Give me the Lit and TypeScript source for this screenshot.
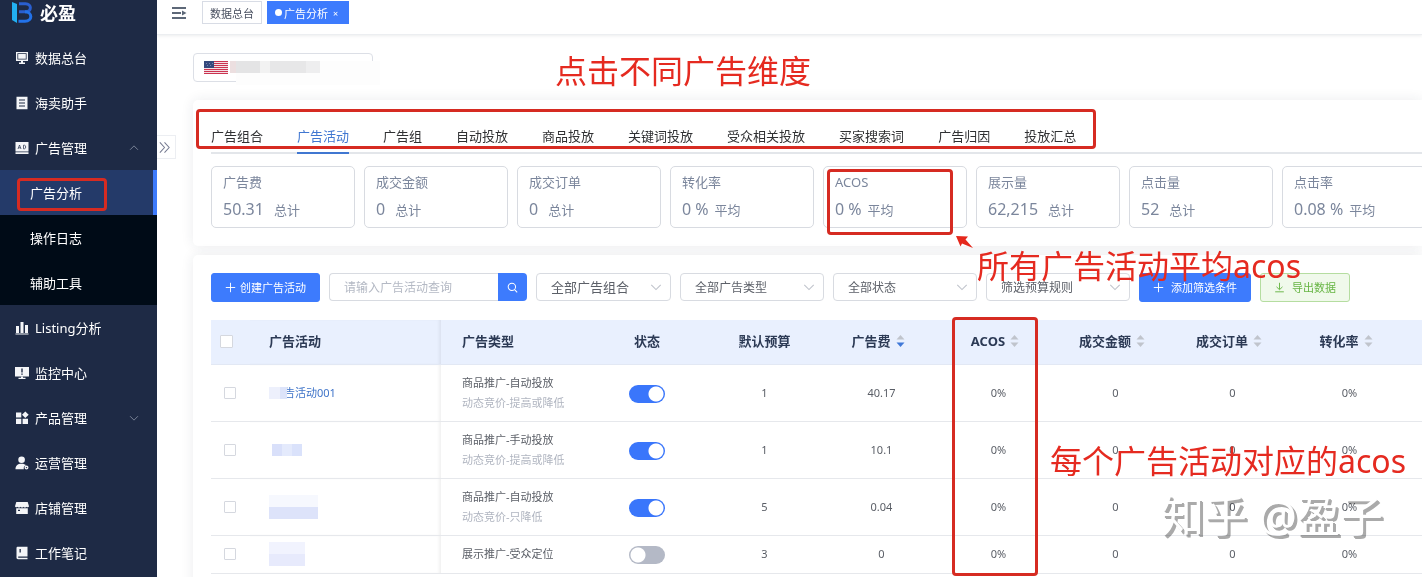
import { LitElement, html, css, svg, nothing } from "lit";
import { customElement, state } from "lit/decorators.js";
import { classMap } from "lit/directives/class-map.js";

const icons: Record<string, unknown> = {
  monitor: svg`<path fill-rule="evenodd" d="M1 1h12v9H1zM2.400 2.300v6.200h9.200V2.300z"/><path d="M3.200 3h7.600v4.800H3.200zM6 10h2v1.500h2V13H4v-1.500h2z"/>`,
  list: svg`<path fill-rule="evenodd" d="M1.500.8h11v12.400h-11zM4 3.400v1.100h6V3.400zM4 6.400v1.100h6V6.400zM4 9.400v1.100h6V9.400z"/>`,
  ad: svg`<path d="M.5 1h13v9.500H.5zM.5 11.300h13V13H.5z"/><path d="M3 8l1.500-4L6 8M3.600 6.800h1.800M8.500 4.200h1c1.600 0 1.600 3.600 0 3.600h-1z" fill="none" stroke="#1e2a45" stroke-width=".7"/>`,
  bars: svg`<path d="M1 5h3v7H1zM5.500 1h3v11h-3zM10 4h3v8h-3zM.5 12.400h13v1H.5z"/>`,
  alert: svg`<path fill-rule="evenodd" d="M0 1h14v9.500H0zM6.300 2.500v4h1.400v-4zM6.300 7.500v1.300h1.400V7.500z"/><path d="M6 10.500h2v1.300h2.500V13h-7v-1.200H6z"/>`,
  grid: svg`<path d="M1 1.500h5.300v5H1zM1 7.800h5.300V13H1zM7.600 7.800H13V13H7.600zM10.300.5l3.400 3.300-3.400 3.300L7 3.800z"/>`,
  user: svg`<circle cx="6.600" cy="3.700" r="3.300"/><path d="M.5 13.200c0-3.500 2-5.500 6.100-5.500 2 0 3.600.6 4.600 1.600a2.800 2.800 0 0 0-2.300 3.900z"/><path fill-rule="evenodd" d="M11.500 9.600a2 2 0 1 1 0 4 2 2 0 0 1 0-4zm0 1.300a.7.7 0 1 0 0 1.400.7.7 0 0 0 0-1.400z"/>`,
  shop: svg`<path d="M1.300 1h11.400L14 5.300c-.3 1.200-2 1.400-2.600.4-.8 1.200-2.200 1.200-2.900 0-.7 1.200-2.200 1.200-3 0-.7 1.200-2.200 1.200-2.900 0C2 6.700.3 6.500 0 5.300z"/><path fill-rule="evenodd" d="M1.200 7.200h11.600V13H1.200zM3 8.800v1.200h2V8.800z"/>`,
  book: svg`<path fill-rule="evenodd" d="M1.500 2.200C1.500 1.300 2 .8 3 .8h9.500v9.700H3.200v1.300h9.300v1.400H3c-1 0-1.500-.5-1.500-1.400zM4.500 3v3.500h1.300V3z"/>`,
  plus: svg`<path d="M7 1v12M1 7h12" fill="none" stroke="currentColor" stroke-width="1.200"/>`,
  search: svg`<circle cx="6.200" cy="6.200" r="4.700" fill="none" stroke="currentColor" stroke-width="1.300"/><path d="M9.600 9.600l3.400 3.700" stroke="currentColor" stroke-width="1.300"/>`,
  download: svg`<path d="M7 1v8.500M3.200 6.200L7 9.800l3.800-3.600M1.500 12.500h11" fill="none" stroke="currentColor" stroke-width="1.200"/>`,
  down: svg`<path d="M1.500 4.500L7 10l5.500-5.500" fill="none" stroke="currentColor" stroke-width="1.300"/>`,
  up: svg`<path d="M1.500 9.500L7 4l5.500 5.500" fill="none" stroke="currentColor" stroke-width="1.300"/>`,
  double: svg`<path d="M2 1.500L7 7l-5 5.500M7 1.500L12 7l-5 5.500" fill="none" stroke="currentColor" stroke-width="1.100"/>`,
};

const icon = (name: string, cls = "icon") =>
  html`<svg class=${cls} viewBox="0 0 14 14" fill="currentColor" aria-hidden="true">${icons[name]}</svg>`;

const MENU = [
  { icon: "monitor", text: "数据总台" },
  { icon: "list", text: "海卖助手" },
  { icon: "ad", text: "广告管理", arrow: "up", children: ["广告分析", "操作日志", "辅助工具"] },
  { icon: "bars", text: "Listing分析" },
  { icon: "alert", text: "监控中心" },
  { icon: "grid", text: "产品管理", arrow: "down" },
  { icon: "user", text: "运营管理" },
  { icon: "shop", text: "店铺管理" },
  { icon: "book", text: "工作笔记" },
];

const TABS = ["广告组合", "广告活动", "广告组", "自动投放", "商品投放", "关键词投放", "受众相关投放", "买家搜索词", "广告归因", "投放汇总"];

const METRICS = [
  ["广告费", "50.31", "总计"],
  ["成交金额", "0", "总计"],
  ["成交订单", "0", "总计"],
  ["转化率", "0 %", "平均"],
  ["ACOS", "0 %", "平均"],
  ["展示量", "62,215", "总计"],
  ["点击量", "52", "总计"],
  ["点击率", "0.08 %", "平均"],
];

const FILTERS = ["全部广告组合", "全部广告类型", "全部状态", "筛选预算规则"];

const SORTABLE = ["广告费", "ACOS", "成交金额", "成交订单", "转化率"];

const ROWS = [
  { name: "告活动001", mask: "a", type: "商品推广-自动投放", bid: "动态竞价-提高或降低", on: true, budget: "1", cost: "40.17" },
  { name: "", mask: "b", type: "商品推广-手动投放", bid: "动态竞价-提高或降低", on: true, budget: "1", cost: "10.1" },
  { name: "", mask: "c", type: "商品推广-自动投放", bid: "动态竞价-只降低", on: true, budget: "5", cost: "0.04" },
  { name: "", mask: "d", type: "展示推广-受众定位", bid: "", on: false, budget: "3", cost: "0" },
];

@customElement("side-menu")
class SideMenu extends LitElement {
  static styles = css`
    :host { display: block; flex: 0 0 157px; background: #1e2a45; color: #fff; font-size: 13px; }
    .brand { display: flex; align-items: center; gap: 7px; height: 35px; padding: 0 0 10px 12px; box-sizing: border-box; font-size: 18px; font-weight: 700; line-height: 24px; }
    .mark { width: 21px; height: 21px; }
    .list { list-style: none; margin: 0; padding: 0; }
    .link { display: flex; align-items: center; height: 45px; padding: 0 18px 0 15px; box-sizing: border-box; color: inherit; text-decoration: none; }
    .icon { width: 14px; height: 14px; margin-right: 6px; color: #f4f5f8; }
    .arrow { width: 10px; height: 10px; margin-left: auto; color: #7e879b; }
    .sub { background: #000b17; }
    .child { padding-left: 30px; }
    .active { background: #243a69; border-right: 4px solid #3d7bfd; }
  `;

  render() {
    return html`
      <div class="brand">
        <svg class="mark" viewBox="0 0 21 21" aria-hidden="true">
          <path d="M0 0l5 2v19l-5-3z" fill="#22b0f2" />
          <path d="M7 1.800h6.500c6.500 0 6.500 8 0 8H7" fill="none" stroke="#2a5fd0" stroke-width="3" />
          <path d="M13 9.800c7.500 0 8 9.400 0 9.400H6.500" fill="none" stroke="#2272ea" stroke-width="3" />
        </svg>
        <span>必盈</span>
      </div>
      <nav>
        <ul class="list">
          ${MENU.map((m) => html`
            <li>
              <a class="link" href="#">${icon(m.icon)}<span>${m.text}</span>${m.arrow ? icon(m.arrow, "arrow") : nothing}</a>
              ${m.children ? html`<ul class="list sub">
                ${m.children.map((c, i) => html`<li><a class=${classMap({ link: true, child: true, active: i === 0 })} href="#">${c}</a></li>`)}
              </ul>` : nothing}
            </li>`)}
        </ul>
      </nav>`;
  }
}

@customElement("top-bar")
class TopBar extends LitElement {
  static styles = css`
    :host { display: flex; gap: 5px; height: 35px; padding: 1px 15px 0; box-sizing: border-box; border-bottom: 1px solid #eceef1; box-shadow: 0 1px 3px rgba(0, 21, 41, 0.08); font-size: 11px; }
    button { font: inherit; border: 0; padding: 0; background: none; }
    .fold { width: 15px; height: 23px; margin-right: 10px; }
    .fold-icon { width: 15px; height: 12px; display: block; }
    .tag { display: flex; align-items: center; height: 23px; padding: 0 7px; box-sizing: border-box; border: 1px solid #d8dce5; color: #495060; text-decoration: none; }
    .current { background: #3d7bfd; border-color: #3d7bfd; color: #fff; gap: 2px; }
    .dot { width: 7px; height: 7px; border-radius: 50%; background: #fff; }
    .current .close { color: #fff; font-size: 9px; line-height: 12px; margin: 3px 3px 0; }
  `;

  render() {
    return html`
      <button class="fold" aria-label="折叠菜单">
        <svg class="fold-icon" viewBox="0 0 15 12" fill="none" stroke="#5d6878" stroke-width="2" aria-hidden="true">
          <path d="M0 1h14M0 6h9M0 11h14" /><path d="M10 3.500L14.500 6l-4.500 2.500z" fill="#5d6878" stroke="none" />
        </svg>
      </button>
      <a class="tag" href="#">数据总台</a>
      <span class="tag current"><i class="dot"></i>广告分析<button class="close" aria-label="关闭">×</button></span>`;
  }
}

@customElement("metric-panel")
class MetricPanel extends LitElement {
  @state() private current = 1;

  static styles = css`
    :host { display: block; }
    .tabs { display: flex; gap: 34px; height: 36px; box-sizing: border-box; border-bottom: 2px solid #e3e6ea; margin-bottom: 12px; }
    .tab { flex: none; height: 36px; padding: 2px 0 0; box-sizing: border-box; border: 0; border-bottom: 2px solid transparent; background: none; font: inherit; font-size: 13px; line-height: 32px; color: #303133; }
    .on { color: #4077d1; border-bottom-color: #4077d1; }
    .cards { display: flex; gap: 9px; }
    .card { flex: 0 0 144px; height: 62px; box-sizing: border-box; padding: 4px 11px; border: 1px solid #d8dbe1; border-radius: 5px; color: #7b869c; }
    .label { font-size: 13px; line-height: 22px; }
    .value { display: flex; align-items: baseline; gap: 10px; font-size: 16px; line-height: 32px; }
    .average { gap: 6px; }
    .note { font-size: 13px; }
  `;

  render() {
    return html`
      <div class="tabs" role="tablist">
        ${TABS.map((t, i) => html`<button role="tab" aria-selected=${i === this.current} class=${classMap({ tab: true, on: i === this.current })} @click=${() => (this.current = i)}>${t}</button>`)}
      </div>
      <div class="cards">
        ${METRICS.map(([label, value, note]) => html`
          <div class="card">
            <div class="label">${label}</div>
            <div class=${classMap({ value: true, average: note === "平均" })}><span>${value}</span><span class="note">${note}</span></div>
          </div>`)}
      </div>`;
  }
}

@customElement("campaign-table")
class CampaignTable extends LitElement {
  static styles = css`
    :host { display: block; }
    .bar { display: flex; gap: 9px; height: 28px; margin-bottom: 19px; }
    button, input, select { font: inherit; margin: 0; box-sizing: border-box; }
    .btn { flex: none; display: flex; align-items: center; gap: 4px; height: 29px; padding: 0 13px; border: 1px solid #3d7bfd; border-radius: 3px; background: #3d7bfd; color: #fff; font-size: 11px; line-height: 16px; }
    .wide { gap: 7px; }
    .icon { width: 11px; height: 11px; }
    .export { background: #f0f9eb; border-color: #b5dda0; color: #67b544; }
    .search { display: flex; flex: 0 0 198px; }
    .query { width: 169px; padding: 0 14px; border: 1px solid #d8dbe1; border-right: 0; border-radius: 4px 0 0 4px; font-size: 12px; background: #fff; }
    .query::placeholder { color: #b4b9c4; opacity: 1; }
    .go { display: grid; place-items: center; width: 29px; padding: 0; border: 0; border-radius: 0 4px 4px 0; background: #3d7bfd; color: #fff; }
    .pick { display: grid; flex: 0 0 144px; align-items: center; }
    .pick:first-of-type { flex-basis: 135px; }
    .field { grid-area: 1 / 1; width: 100%; height: 28px; padding: 0 14px; appearance: none; border: 1px solid #d8dbe1; border-radius: 4px; background: #fff; color: #5c6068; font-size: 12px; }
    .large { font-size: 13px; }
    .chevron { grid-area: 1 / 1; justify-self: end; width: 12px; height: 12px; margin-right: 9px; color: #c0c4cc; pointer-events: none; }

    table { width: 100%; min-width: 1315px; table-layout: fixed; border-collapse: separate; border-spacing: 0; font-size: 11px; line-height: 20px; color: #5a5e66; }
    .c-check { width: 39px; }
    .c-name { width: 191px; }
    .c-type { width: 147px; }
    .c-state { width: 118px; }
    .c-num { width: 117px; }
    th { height: 45px; padding: 0 0 2px; box-sizing: border-box; background: #e9f0fe; color: #2c3a55; font-size: 13px; font-weight: 700; border-bottom: 1px solid #e2e8f4; }
    td { height: 57px; padding: 0; box-sizing: border-box; border-bottom: 1px solid #e6e8ec; text-align: center; }
    .short td { height: 38px; padding-bottom: 1px; }
    .left { text-align: left; padding-left: 21px; }
    .name { text-align: left; padding-left: 19px; box-shadow: inset -3px 0 3px -1px rgba(0, 0, 0, 0.06); }
    .bid { color: #b0b5c0; }
    .box { appearance: none; display: block; width: 12px; height: 12px; margin: 0 auto 0 13px; border: 1px solid #d5d8df; border-radius: 1px; background: #fff; }
    th .box { width: 13px; height: 13px; margin-left: 9px; }
    .switch { appearance: none; display: block; width: 36px; height: 18px; margin: 2px auto 0; border-radius: 9px; background: radial-gradient(circle at 9px 9px, #fff 7px, transparent 8px) #b4b9c6; }
    .switch:checked { background: radial-gradient(circle at 27px 9px, #fff 7px, transparent 8px) #3a76fb; }
    .head { display: inline-flex; align-items: center; gap: 5px; margin-right: 7px; }
    .sort { width: 9px; height: 12px; }
    .campaign { display: flex; align-items: center; color: #3f74c9; text-decoration: none; }
    .mask { width: 18px; height: 12px; margin-right: -3px; z-index: 1; background: linear-gradient(90deg, #edf0fc 60%, #dde4fa 60%); }
    .b { width: 30px; height: 12px; margin-left: 3px; background: linear-gradient(90deg, #d9e0fa 10px, #e4eafc 10px 20px, #dae2fb 20px); }
    .c { width: 49px; height: 24px; background: linear-gradient(180deg, #f6f8fe 50%, #dde3fa 50%); }
    .d { width: 36px; height: 24px; background: linear-gradient(180deg, #f1f3fe 50%, #e7eafc 50%); }
  `;

  private sort(active: boolean) {
    return html`<svg class="sort" viewBox="0 0 9 12" aria-hidden="true"><path d="M4.500 0L8.500 4.500h-8z" fill="#c0c4cc" /><path d="M4.500 12L.5 7.500h8z" fill=${active ? "#3f78d8" : "#c0c4cc"} /></svg>`;
  }

  render() {
    return html`
      <div class="bar">
        <button class="btn">${icon("plus")}创建广告活动</button>
        <div class="search">
          <input class="query" aria-label="广告活动查询" placeholder="请输入广告活动查询" />
          <button class="go" aria-label="查询">${icon("search")}</button>
        </div>
        ${FILTERS.map((f, i) => html`
          <label class="pick">
            <select class=${classMap({ field: true, large: i === 0 })} aria-label=${f}><option>${f}</option></select>
            ${icon("down", "chevron")}
          </label>`)}
        <button class="btn wide">${icon("plus")}添加筛选条件</button>
        <button class="btn wide export">${icon("download")}导出数据</button>
      </div>
      <table>
        <colgroup>
          <col class="c-check" /><col class="c-name" /><col class="c-type" /><col class="c-state" />
          ${[0, 1, 2, 3, 4, 5].map(() => html`<col class="c-num" />`)}<col />
        </colgroup>
        <thead>
          <tr>
            <th><input class="box" type="checkbox" aria-label="全选" /></th>
            <th class="name">广告活动</th>
            <th class="left">广告类型</th>
            <th>状态</th>
            <th>默认预算</th>
            ${SORTABLE.map((s, i) => html`<th><span class="head">${s}${this.sort(i === 0)}</span></th>`)}
            <th></th>
          </tr>
        </thead>
        <tbody>
          ${ROWS.map((r) => html`
            <tr class=${r.bid ? "" : "short"}>
              <td><input class="box" type="checkbox" aria-label="选择" /></td>
              <td class="name"><a class="campaign" href="#"><i class="mask ${r.mask}"></i>${r.name}</a></td>
              <td class="left"><div>${r.type}</div>${r.bid ? html`<div class="bid">${r.bid}</div>` : nothing}</td>
              <td><input class="switch" type="checkbox" role="switch" aria-label="状态" .checked=${r.on} /></td>
              <td>${r.budget}</td>
              <td>${r.cost}</td>
              <td>0%</td>
              <td>0</td>
              <td>0</td>
              <td>0%</td>
              <td></td>
            </tr>`)}
        </tbody>
      </table>`;
  }
}

@customElement("app-root")
class AppRoot extends LitElement {
  static styles = css`
    :host { display: flex; position: relative; height: 100vh; overflow: hidden; background: #fff; font-family: "Noto Sans", "Noto Sans CJK SC", sans-serif; font-size: 13px; }
    .main { flex: 1; min-width: 0; overflow: hidden; }
    .content { display: flex; flex-direction: column; gap: 9px; padding: 18px 0 0 36px; }
    .store { display: grid; grid-template-columns: 180px; align-items: center; height: 29px; margin-bottom: 9px; }
    .store-field { grid-area: 1 / 1; width: 100%; height: 29px; box-sizing: border-box; appearance: none; border: 1px solid #dcdfe6; border-radius: 4px; background: #fff; }
    .store-value { grid-area: 1 / 1; display: flex; align-items: center; gap: 2px; padding-left: 11px; pointer-events: none; }
    .flag { flex: none; width: 24px; height: 13px; }
    .veil { flex: none; width: 150px; height: 24px; margin-bottom: -10px; background: linear-gradient(#fdfdfd, #fdfdfd) 6px 0 no-repeat; }
    .blur { display: block; width: 90px; height: 12px; background: linear-gradient(90deg, #ecdfe0 6px, #e4e4e5 6px 30px, #f2f2f2 30px 40px, #e7e7e8 40px 76px, #eeeeef 76px); }
    .panel { padding: 18px 0 18px 18px; background: #fff; border-radius: 5px 0 0 5px; box-shadow: 0 0 13px rgba(30, 42, 69, 0.09); }
    .handle { position: absolute; left: 157px; top: 135px; display: grid; place-items: center; width: 19px; height: 24px; padding: 0 3px 0 0; border: 1px solid #eceef2; border-left: 0; background: #fff; color: #767b91; }
    .icon { width: 13px; height: 13px; }

    .notes { position: absolute; inset: 0; pointer-events: none; color: #e52a20; font-size: 32px; line-height: 40px; white-space: nowrap; }
    .frame, .text, .pointer, .credit { position: absolute; box-sizing: border-box; }
    .frame { border: 3px solid #d62b22; border-radius: 4px; }
    .f-menu { left: 17px; top: 178px; width: 90px; height: 33px; }
    .f-tabs { left: 196px; top: 109px; width: 900px; height: 40px; }
    .f-card { left: 827px; top: 169px; width: 126px; height: 66px; }
    .f-column { left: 952px; top: 317px; width: 86px; height: 259px; }
    .t-tabs { left: 555px; top: 51px; }
    .t-card { left: 977px; top: 246px; }
    .t-column { left: 1050px; top: 441px; }
    .pointer { left: 956px; top: 236px; width: 17px; height: 12px; }
    .credit { left: 1161px; top: 490px; font-size: 43px; line-height: 52px; color: #fff; text-shadow: 2px 2px 0 #aaa, 3px 3px 0 #aaa; mix-blend-mode: multiply; pointer-events: none; white-space: nowrap; }
  `;

  render() {
    return html`
      <side-menu></side-menu>
      <div class="main">
        <top-bar></top-bar>
        <main class="content">
          <div class="store">
            <select class="store-field" aria-label="店铺"><option></option></select>
            <span class="store-value">
              <svg class="flag" viewBox="0 0 24 13" aria-hidden="true">
                <path fill="#f3dfe4" d="M0 0h24v13H0z" />
                <path fill="#cb3350" d="M0 0h24v1H0zM0 2h24v1H0zM0 4h24v1H0zM0 6h24v1H0zM0 8h24v1H0zM0 10h24v1H0zM0 12h24v1H0z" />
                <path fill="#35497d" d="M0 0h10v7H0z" />
                <path fill="#7683ac" d="M2 2h1v1H2zM5 2h1v1H5zM8 2h1v1H8zM3 4h1v1H3zM6 4h1v1H6z" />
              </svg>
              <span class="veil"><i class="blur"></i></span>
            </span>
          </div>
          <section class="panel"><metric-panel></metric-panel></section>
          <section class="panel"><campaign-table></campaign-table></section>
        </main>
      </div>
      <button class="handle" aria-label="展开">${icon("double")}</button>
      <div class="credit">知乎 @盈子</div>
      <div class="notes">
        <div class="frame f-menu"></div>
        <div class="frame f-tabs"></div>
        <div class="frame f-card"></div>
        <div class="frame f-column"></div>
        <div class="text t-tabs">点击不同广告维度</div>
        <div class="text t-card">所有广告活动平均acos</div>
        <div class="text t-column">每个广告活动对应的acos</div>
        <svg class="pointer" viewBox="0 0 17 12" aria-hidden="true"><path d="M0 0l12 .5-2.500 3L17 12 6 7.500 4.500 10.500z" fill="#e5281c" /></svg>
      </div>`;
  }
}
